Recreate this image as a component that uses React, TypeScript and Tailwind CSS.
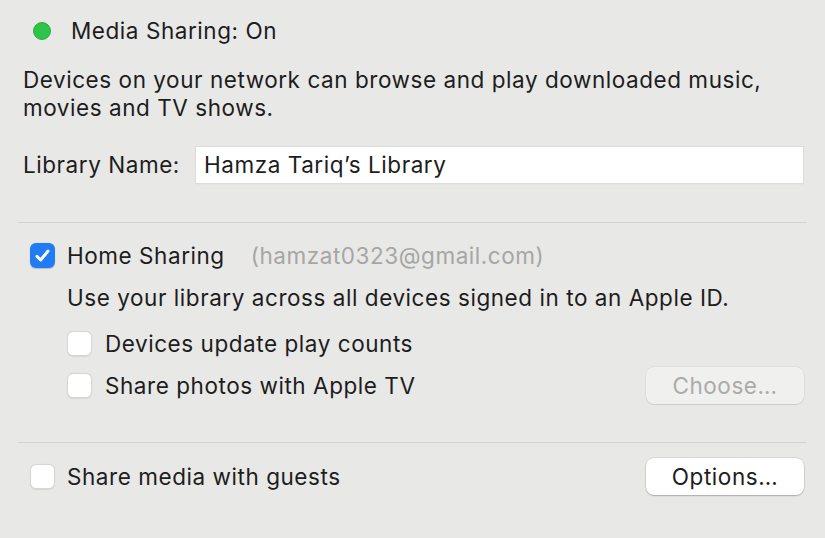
import React from "react";

function Box({ checked = false }: { checked?: boolean }) {
  if (checked) {
    return (
      <span className="flex h-[25px] w-[25px] shrink-0 items-center justify-center rounded-[6px] bg-[#1f7cf5] shadow-[0_0.5px_1px_rgba(0,0,0,0.2)]">
        <svg width="17" height="17" viewBox="0 0 16 16" fill="none">
          <path d="M2.8 8.8 6.3 12.2 13.2 3.8" stroke="#fff" strokeWidth="2.8" strokeLinecap="round" strokeLinejoin="round" />
        </svg>
      </span>
    );
  }
  return (
    <span className="block h-[25px] w-[25px] shrink-0 rounded-[6px] border border-[#d6d6d4] bg-white shadow-[0_0.5px_1px_rgba(0,0,0,0.08)]" />
  );
}

export default function App() {
  return (
    <div
      className="h-[538px] w-[825px] overflow-hidden bg-[#e8e8e6] text-[22.5px] leading-[28px] tracking-[0.55px] text-[#1d1d1d]"
      style={{ fontFamily: "Inter, 'Noto Sans', sans-serif" }}
    >
      {/* status */}
      <div className="flex h-[28px] items-center gap-[20px] pl-[33px] mt-[17px]">
        <span className="h-[18px] w-[18px] rounded-full border border-[#27ad41] bg-[#2ec44a]" />
        <span>Media Sharing: On</span>
      </div>

      <p className="mt-[21px] pl-[23px]">
        Devices on your network can browse and play downloaded music,
        <br />
        movies and TV shows.
      </p>

      <div className="mt-[25px] flex items-center pl-[23px] pr-[22px]">
        <span className="w-[173px]">Library Name:</span>
        <div className="flex h-[36px] flex-1 items-center bg-white pl-[8px] shadow-[0_0_0_1px_#dcdcda,0_1px_1px_rgba(0,0,0,0.1)]">
          Hamza Tariq’s Library
        </div>
      </div>

      <div className="mx-[18px] mt-[39px] h-px bg-[#d3d3d1]" />

      {/* home sharing */}
      <div className="mt-[20px] flex h-[25px] items-center pl-[30px]">
        <Box checked />
        <span className="ml-[12px]">Home Sharing</span>
        <span className="ml-[26px] text-[#a6a6a5]">(hamzat0323@gmail.com)</span>
      </div>

      <p className="mt-[16px] pl-[67px]">
        Use your library across all devices signed in to an Apple ID.
      </p>

      <div className="mt-[19px] flex h-[25px] items-center pl-[67px]">
        <Box />
        <span className="ml-[13px]">Devices update play counts</span>
      </div>

      <div className="mt-[11px] flex h-[37px] items-center pl-[67px] pr-[21px]">
        <Box />
        <span className="ml-[13px] flex-1">Share photos with Apple TV</span>
        <button className="h-[37px] w-[158px] rounded-[8px] bg-[#f0f0ef] text-[#ababaa] shadow-[0_0_0_0.5px_rgba(0,0,0,0.08),0_1px_1px_rgba(0,0,0,0.08)]">
          Choose…
        </button>
      </div>

      <div className="mx-[18px] mt-[38px] h-px bg-[#d3d3d1]" />

      <div className="mt-[15px] flex h-[37px] items-center pl-[30px] pr-[21px]">
        <Box />
        <span className="ml-[12px] flex-1">Share media with guests</span>
        <button className="h-[37px] w-[158px] rounded-[8px] bg-white text-[#1d1d1d] shadow-[0_0_0_0.5px_rgba(0,0,0,0.15),0_1px_1.5px_rgba(0,0,0,0.2)]">
          Options…
        </button>
      </div>
    </div>
  );
}
